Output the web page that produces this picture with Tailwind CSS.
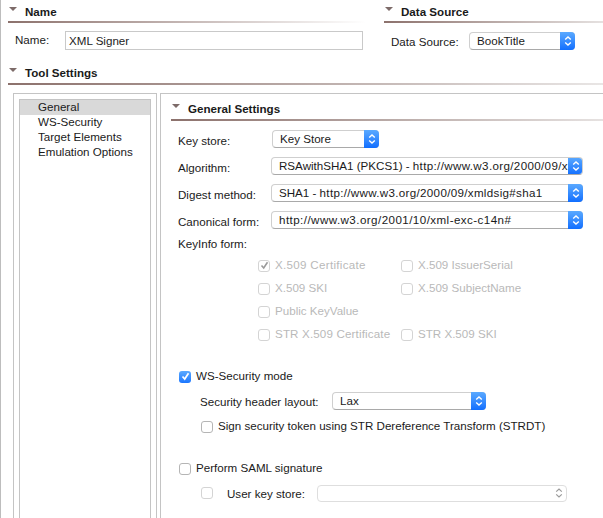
<!DOCTYPE html>
<html lang="en">
<head>
    <meta charset="UTF-8">
    <title>XML Signer</title>
    <script src="https://cdn.jsdelivr.net/npm/@tailwindcss/browser@4"></script>
</head>
<body class="bg-white text-[#1a1a1a] text-[11.6px] leading-[15px] font-['Liberation_Sans',Arial,sans-serif] h-[518px] overflow-hidden border-l border-[#bdbdbd] flex flex-col">

    <!-- Name + Data Source -->
    <div class="flex h-[62px] shrink-0">
        <div class="ml-[7px] w-[357px]">
            <div class="relative h-[23px] border-b-2 [border-image:linear-gradient(to_right,#8c716c,#ffffff)_1]">
                <svg class="absolute left-[1px] top-[7px]" width="8" height="4"><path d="M0 0h8L4 4z" fill="#7d6b69"/></svg>
                <span class="absolute left-[17px] top-[4px] font-bold">Name</span>
            </div>
            <div class="flex items-center mt-[8px]">
                <span class="ml-[7px] w-[50px] pb-[2px]">Name:</span>
                <div class="w-[298px] h-[19px] border border-[#c9c9c9] pl-[3px] leading-[17px] text-[#222]">XML Signer</div>
            </div>
        </div>
        <div class="ml-[19px] flex-1">
            <div class="relative h-[23px] border-b-2 [border-image:linear-gradient(to_right,#8c716c,#e6e2e1)_1]">
                <svg class="absolute left-[1px] top-[7px]" width="8" height="4"><path d="M0 0h8L4 4z" fill="#7d6b69"/></svg>
                <span class="absolute left-[17px] top-[4px] font-bold">Data Source</span>
            </div>
            <div class="flex items-center mt-[9px]">
                <span class="ml-[7px] w-[78px]">Data Source:</span>
                <div class="relative w-[106px] h-[18px] rounded-[4px] bg-white border border-[#cfcfcf] border-b-[#a9a9a9] pl-[7px]">
                    BookTitle
                    <div class="absolute -right-px -top-px w-[15px] h-[18px] rounded-r-[4px] bg-linear-to-b from-[#5aa9ff] to-[#0f6eff] flex items-center justify-center">
                        <svg width="8" height="12" fill="none" stroke="#fff" stroke-width="1.4"><path d="M1.2 4.6 4 2l2.8 2.6M1.2 7.4 4 10l2.8-2.6"/></svg>
                    </div>
                </div>
            </div>
        </div>
    </div>

    <!-- Tool Settings -->
    <div class="ml-[7px] relative h-[23px] shrink-0 border-b-2 [border-image:linear-gradient(to_right,#8c716c,#e9e6e5)_1]">
        <svg class="absolute left-[1px] top-[6px]" width="8" height="4"><path d="M0 0h8L4 4z" fill="#7d6b69"/></svg>
        <span class="absolute left-[17px] top-[3px] font-bold">Tool Settings</span>
    </div>

    <div class="flex flex-1 mt-[8px] ml-[12px] min-h-0">
        <!-- Left list -->
        <div class="w-[144px] border-x border-t border-[#c4c4c4] pt-[5px] px-[5px] shrink-0">
            <div class="h-full border-x border-t border-[#c4c4c4] w-[132px]">
                <div class="pl-[18px] bg-[#d9d9d9] h-[15px] leading-[14px]">General</div>
                <div class="pl-[18px] h-[15px] leading-[13px]">WS-Security</div>
                <div class="pl-[18px] h-[15px] leading-[13px]">Target Elements</div>
                <div class="pl-[18px] h-[15px] leading-[13px]">Emulation Options</div>
            </div>
        </div>

        <!-- Right pane -->
        <div class="ml-[3px] flex-1 border-l border-t border-[#c4c4c4]">
            <div class="ml-[10px] relative h-[27px] border-b-2 [border-image:linear-gradient(to_right,#8c716c,#e6e2e1)_1]">
                <svg class="absolute left-[1px] top-[10px]" width="8" height="4"><path d="M0 0h8L4 4z" fill="#7d6b69"/></svg>
                <span class="absolute left-[17px] top-[7px] font-bold">General Settings</span>
            </div>

            <div class="flex items-center mt-[9px] h-[18px]">
                <span class="ml-[17px] w-[94px] pt-[2px]">Key store:</span>
                <div class="relative w-[107px] h-[18px] rounded-[4px] border border-[#cfcfcf] border-b-[#a9a9a9] pl-[7px]">
                    Key Store
                    <div class="absolute -right-px -top-px w-[15px] h-[18px] rounded-r-[4px] bg-linear-to-b from-[#5aa9ff] to-[#0f6eff] flex items-center justify-center">
                        <svg width="8" height="12" fill="none" stroke="#fff" stroke-width="1.4"><path d="M1.2 4.6 4 2l2.8 2.6M1.2 7.4 4 10l2.8-2.6"/></svg>
                    </div>
                </div>
            </div>

            <div class="flex items-center mt-[9px] h-[18px]">
                <span class="ml-[17px] w-[93px] pt-[2px]">Algorithm:</span>
                <div class="relative w-[312px] h-[18px] rounded-[4px] border border-[#cfcfcf] border-b-[#a9a9a9] pl-[7px] overflow-hidden whitespace-nowrap">
                    RSAwithSHA1 (PKCS1) - <span class="tracking-[0.35px]">http://www.w3.org/2000/09/xmldsig#rsa-sha1</span>
                    <div class="absolute -right-px -top-px w-[15px] h-[18px] rounded-r-[4px] bg-linear-to-b from-[#5aa9ff] to-[#0f6eff] flex items-center justify-center">
                        <svg width="8" height="12" fill="none" stroke="#fff" stroke-width="1.4"><path d="M1.2 4.6 4 2l2.8 2.6M1.2 7.4 4 10l2.8-2.6"/></svg>
                    </div>
                </div>
            </div>

            <div class="flex items-center mt-[9px] h-[18px]">
                <span class="ml-[17px] w-[93px] pt-[2px]">Digest method:</span>
                <div class="relative w-[312px] h-[18px] rounded-[4px] border border-[#cfcfcf] border-b-[#a9a9a9] pl-[7px]">
                    SHA1 - <span class="tracking-[0.32px]">http://www.w3.org/2000/09/xmldsig#sha1</span>
                    <div class="absolute -right-px -top-px w-[15px] h-[18px] rounded-r-[4px] bg-linear-to-b from-[#5aa9ff] to-[#0f6eff] flex items-center justify-center">
                        <svg width="8" height="12" fill="none" stroke="#fff" stroke-width="1.4"><path d="M1.2 4.6 4 2l2.8 2.6M1.2 7.4 4 10l2.8-2.6"/></svg>
                    </div>
                </div>
            </div>

            <div class="flex items-center mt-[9px] h-[18px]">
                <span class="ml-[17px] w-[93px] pt-[2px]">Canonical form:</span>
                <div class="relative w-[312px] h-[18px] rounded-[4px] border border-[#cfcfcf] border-b-[#a9a9a9] pl-[7px] tracking-[0.44px]">
                    http://www.w3.org/2001/10/xml-exc-c14n#
                    <div class="absolute -right-px -top-px w-[15px] h-[18px] rounded-r-[4px] bg-linear-to-b from-[#5aa9ff] to-[#0f6eff] flex items-center justify-center">
                        <svg width="8" height="12" fill="none" stroke="#fff" stroke-width="1.4"><path d="M1.2 4.6 4 2l2.8 2.6M1.2 7.4 4 10l2.8-2.6"/></svg>
                    </div>
                </div>
            </div>

            <div class="ml-[17px] mt-[7px] h-[15px]">KeyInfo form:</div>

            <!-- KeyInfo options, all disabled -->
            <div class="grid grid-cols-[143px_auto] gap-y-[8px] ml-[97px] mt-[7px] text-[#b9b9b9]">
                <div class="flex items-center gap-[5px] h-[15px]">
                    <span class="w-[12px] h-[12px] rounded-[3px] border border-[#d4d4d4] flex items-center justify-center">
                        <svg width="9" height="9" fill="none" stroke="#9a9a9a" stroke-width="1.6"><path d="M1.5 4.5 3.7 7 7.5 1.2"/></svg>
                    </span><span class="pb-[2px] tracking-[0.3px]">X.509 Certificate</span>
                </div>
                <div class="flex items-center gap-[5px] h-[15px]"><span class="w-[12px] h-[12px] rounded-[3px] border border-[#d4d4d4]"></span><span class="pb-[2px]">X.509 IssuerSerial</span></div>
                <div class="flex items-center gap-[5px] h-[15px]"><span class="w-[12px] h-[12px] rounded-[3px] border border-[#d4d4d4]"></span><span class="pb-[2px]">X.509 SKI</span></div>
                <div class="flex items-center gap-[5px] h-[15px]"><span class="w-[12px] h-[12px] rounded-[3px] border border-[#d4d4d4]"></span><span class="pb-[2px]">X.509 SubjectName</span></div>
                <div class="flex items-center gap-[5px] h-[15px] col-span-2"><span class="w-[12px] h-[12px] rounded-[3px] border border-[#d4d4d4]"></span><span class="pb-[2px]">Public KeyValue</span></div>
                <div class="flex items-center gap-[5px] h-[15px]"><span class="w-[12px] h-[12px] rounded-[3px] border border-[#d4d4d4]"></span><span class="pb-[2px] tracking-[0.15px]">STR X.509 Certificate</span></div>
                <div class="flex items-center gap-[5px] h-[15px]"><span class="w-[12px] h-[12px] rounded-[3px] border border-[#d4d4d4]"></span><span class="pb-[2px]">STR X.509 SKI</span></div>
            </div>

            <div class="flex items-center gap-[5px] ml-[18px] mt-[27px] h-[15px]">
                <span class="w-[12px] h-[12px] rounded-[3px] bg-linear-to-b from-[#5aa9ff] to-[#1a76ff] flex items-center justify-center">
                    <svg width="9" height="9" fill="none" stroke="#fff" stroke-width="1.7"><path d="M1.5 4.5 3.7 7 7.5 1.2"/></svg>
                </span><span class="pb-[2px]">WS-Security mode</span>
            </div>

            <div class="flex items-center ml-[39px] mt-[8px] h-[18px]">
                <span class="w-[132px]">Security header layout:</span>
                <div class="relative w-[154px] h-[18px] rounded-[4px] border border-[#cfcfcf] border-b-[#a9a9a9] pl-[7px]">
                    Lax
                    <div class="absolute -right-px -top-px w-[15px] h-[18px] rounded-r-[4px] bg-linear-to-b from-[#5aa9ff] to-[#0f6eff] flex items-center justify-center">
                        <svg width="8" height="12" fill="none" stroke="#fff" stroke-width="1.4"><path d="M1.2 4.6 4 2l2.8 2.6M1.2 7.4 4 10l2.8-2.6"/></svg>
                    </div>
                </div>
            </div>

            <div class="flex items-center gap-[5px] ml-[40px] mt-[9px] h-[15px]">
                <span class="w-[12px] h-[12px] rounded-[3px] border border-[#b5b5b5]"></span><span class="pb-[2px]">Sign security token using STR Dereference Transform (STRDT)</span>
            </div>

            <div class="flex items-center gap-[5px] ml-[18px] mt-[27px] h-[15px]">
                <span class="w-[12px] h-[12px] rounded-[3px] border border-[#b5b5b5]"></span><span class="pb-[2px]">Perform SAML signature</span>
            </div>

            <div class="flex items-center ml-[40px] mt-[8px] h-[18px]">
                <span class="w-[12px] h-[12px] rounded-[3px] border border-[#d4d4d4] mr-[14px]"></span>
                <span class="w-[90px]">User key store:</span>
                <div class="w-[250px] h-[17px] rounded-[4px] border border-[#dedede] flex items-center justify-end pr-[3px]">
                    <svg width="8" height="12" fill="none" stroke="#9a9a9a" stroke-width="1.2"><path d="M1.2 4.6 4 2l2.8 2.6M1.2 7.4 4 10l2.8-2.6"/></svg>
                </div>
            </div>
        </div>
    </div>
</body>
</html>
